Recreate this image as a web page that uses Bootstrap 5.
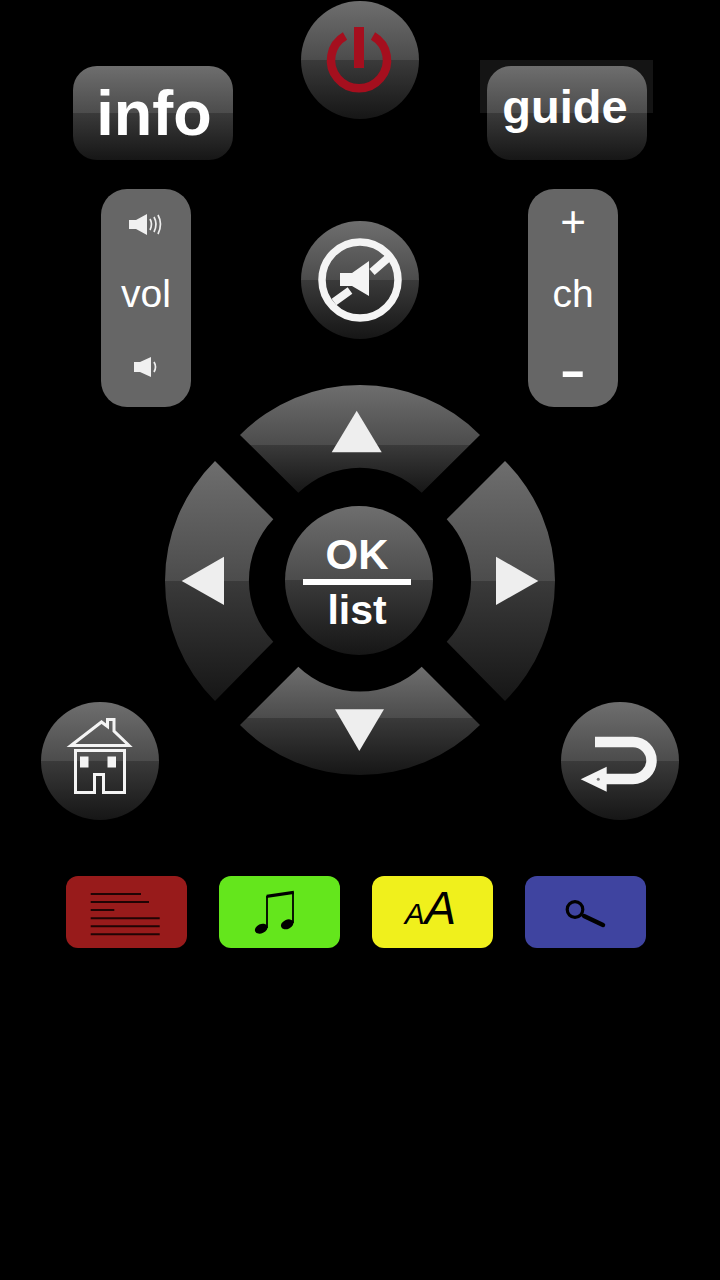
<!DOCTYPE html>
<html lang="en">

<head>
    <meta charset="UTF-8" />
    <meta name="viewport" content="width=device-width, initial-scale=1" />
    <title>Remote</title>
    <link href="https://cdn.jsdelivr.net/npm/bootstrap@5.3.2/dist/css/bootstrap.min.css" rel="stylesheet" />
    <style>
        html,
        body {
            background: #000;
            font-family: "Liberation Sans", Arial, sans-serif;
        }

        .remote {
            width: 720px;
            height: 1280px;
            overflow: hidden;
        }

        .key {
            border: 0;
            padding: 0;
            color: #fff;
            font-family: "Liberation Sans", Arial, sans-serif;
            line-height: 1;
        }

        .gloss {
            background: linear-gradient(#6e6e6e 0, #4c4c4c 50%, #3a3a3a 50%, #161616 100%);
        }

        .round-key {
            width: 118px;
            height: 118px;
            border-radius: 50%;
        }

        .wide-key {
            width: 160px;
            height: 94px;
            border-radius: 24px;
        }

        .top-row {
            padding: 1px 73px 0;
        }

        .info-key {
            margin-top: 65px;
            font-size: 63px;
            font-weight: 700;
            padding-left: 2px;
        }

        .guide-wrap {
            margin-top: 65px;
            width: 160px;
            height: 94px;
        }

        .guide-shade {
            left: -7px;
            top: -6px;
            width: 173px;
            height: 53px;
            background: #141414;
        }

        .guide-key {
            font-size: 47px;
            font-weight: 700;
            padding-bottom: 14px;
            padding-right: 4px;
        }

        .mid-row {
            margin-top: 29px;
            padding: 0 102px 0 101px;
        }

        .rocker {
            width: 90px;
            height: 218px;
            border-radius: 26px;
            background: #666;
            color: #fff;
        }

        .rocker-word {
            font-size: 39px;
            line-height: 1;
        }

        .mute-key {
            margin-top: 32px;
        }

        .vol-up {
            margin-top: 20px;
        }

        .vol-word {
            margin-top: 35px;
        }

        .vol-down {
            margin-top: 41px;
        }

        .ch-plus {
            margin-top: 8px;
            font-size: 44px;
            line-height: 50px;
        }

        .ch-word {
            margin-top: 27px;
        }

        .ch-minus {
            margin-top: 32px;
            font-size: 46px;
            font-weight: 700;
            line-height: 50px;
            transform: scaleX(1.7);
        }

        .pad-row {
            margin-top: -22px;
            padding: 0 41px;
            height: 435px;
        }

        .dpad {
            width: 390px;
            height: 390px;
        }

        .ok-key {
            left: 120px;
            top: 121px;
            width: 148px;
            height: 149px;
            border-radius: 50%;
            font-weight: 700;
            padding: 4px 4px 0 0;
        }

        .ok-word {
            font-size: 42px;
            line-height: 48px;
        }

        .ok-bar {
            width: 108px;
            height: 6px;
            background: #fff;
        }

        .list-word {
            margin-top: 1px;
            font-size: 41px;
            line-height: 48px;
        }

        .color-row {
            margin-top: 56px;
            padding-left: 66px;
            gap: 32px;
        }

        .color-key {
            width: 121px;
            height: 72px;
            border-radius: 12px;
        }

        .key-red {
            background: #981b1b;
        }

        .key-green {
            background: #64e61c;
        }

        .key-yellow {
            background: #f0f01c;
            color: #000;
            font-style: italic;
            padding: 8px 4px 0 0;
        }

        .key-blue {
            background: #3f44a0;
        }

        .aa-small {
            font-size: 30px;
        }

        .aa-big {
            font-size: 47px;
        }
    </style>
</head>

<body>
    <div class="remote">
        <div class="top-row d-flex justify-content-between align-items-start">
            <button type="button" class="btn key gloss wide-key info-key d-flex align-items-center justify-content-center">info</button>
            <button type="button" class="btn key gloss round-key d-flex align-items-center justify-content-center" aria-label="power">
                <svg width="118" height="118" viewBox="0 0 118 118">
                    <path d="M44 35A28 28 0 1 0 72 35" fill="none" stroke="#a50f1e" stroke-width="8.5" />
                    <rect x="53" y="26" width="10" height="41" fill="#a50f1e" />
                </svg>
            </button>
            <div class="guide-wrap position-relative">
                <div class="guide-shade position-absolute"></div>
                <button type="button" class="btn key gloss wide-key guide-key position-relative d-flex align-items-center justify-content-center">guide</button>
            </div>
        </div>

        <div class="mid-row d-flex justify-content-between align-items-start">
            <div class="rocker d-flex flex-column align-items-center">
                <svg class="vol-up" width="36" height="30" viewBox="0 0 36 30">
                    <path d="M1 11H8L19 5V26L8 20H1Z" fill="#f0f0f0" />
                    <path d="M22 10Q25 15 22 21M26 8Q30 15 26 23M30 6Q35 15 30 25" fill="none" stroke="#eee" stroke-width="1.7" />
                </svg>
                <div class="rocker-word vol-word">vol</div>
                <svg class="vol-down" width="30" height="26" viewBox="0 0 30 26">
                    <path d="M3 8H9L20 3V23L9 18H3Z" fill="#f0f0f0" />
                    <path d="M23 8Q26 13 23 18" fill="none" stroke="#eee" stroke-width="1.7" />
                </svg>
            </div>

            <button type="button" class="btn key gloss round-key mute-key d-flex align-items-center justify-content-center" aria-label="mute">
                <svg width="118" height="118" viewBox="0 0 118 118">
                    <circle cx="59" cy="59" r="38" fill="none" stroke="#f4f4f4" stroke-width="7.5" />
                    <path d="M33 81L49 69.5M71 51L87 37" fill="none" stroke="#f4f4f4" stroke-width="8" />
                    <path d="M39 52H51L68 40V75L51 65H39Z" fill="#f4f4f4" />
                </svg>
            </button>

            <div class="rocker d-flex flex-column align-items-center">
                <div class="ch-plus">+</div>
                <div class="rocker-word ch-word">ch</div>
                <div class="ch-minus">-</div>
            </div>
        </div>

        <div class="pad-row d-flex justify-content-between">
            <button type="button" class="btn key gloss round-key align-self-end d-flex align-items-center justify-content-center" aria-label="home">
                <svg width="118" height="118" viewBox="0 0 118 118">
                    <path d="M30 43.5L60.5 20L66.5 24.5V17.5H73V29L88 43.5Z" fill="none" stroke="#f4f4f4" stroke-width="3" />
                    <path d="M34.5 48.5H83.5V90.5H62.5V72.5H53.5V90.5H34.5Z" fill="none" stroke="#f4f4f4" stroke-width="3" />
                    <rect x="39" y="54.5" width="8.5" height="11" fill="#f4f4f4" />
                    <rect x="66.5" y="54.5" width="8.5" height="11" fill="#f4f4f4" />
                </svg>
            </button>

            <div class="dpad position-relative">
                <svg width="390" height="390" viewBox="165 385 390 390">
                    <defs>
                        <linearGradient id="glossTop" x1="0" y1="0" x2="0" y2="1">
                            <stop offset="0" stop-color="#6e6e6e" />
                            <stop offset=".56" stop-color="#4c4c4c" />
                            <stop offset=".56" stop-color="#3a3a3a" />
                            <stop offset="1" stop-color="#161616" />
                        </linearGradient>
                        <linearGradient id="glossBottom" x1="0" y1="0" x2="0" y2="1">
                            <stop offset="0" stop-color="#6e6e6e" />
                            <stop offset=".47" stop-color="#4c4c4c" />
                            <stop offset=".47" stop-color="#3a3a3a" />
                            <stop offset="1" stop-color="#161616" />
                        </linearGradient>
                        <linearGradient id="glossSide" x1="0" y1="0" x2="0" y2="1">
                            <stop offset="0" stop-color="#6e6e6e" />
                            <stop offset=".5" stop-color="#4c4c4c" />
                            <stop offset=".5" stop-color="#3a3a3a" />
                            <stop offset="1" stop-color="#161616" />
                        </linearGradient>
                    </defs>
                    <path d="M240 435A169 169 0 0 1 480 435L421.7 492.7A89 89 0 0 0 298.3 492.7Z" fill="url(#glossTop)" />
                    <path d="M240 725A169 169 0 0 0 480 725L421.7 666.7A89 89 0 0 1 298.3 666.7Z" fill="url(#glossBottom)" />
                    <path d="M215 461A169 169 0 0 0 215 701L273.3 641.7A89 89 0 0 1 273.3 519.3Z" fill="url(#glossSide)" />
                    <path d="M505 461A169 169 0 0 1 505 701L446.7 641.7A89 89 0 0 0 446.7 519.3Z" fill="url(#glossSide)" />
                    <path d="M356.7 410.7L381.7 452.3H331.7Z" fill="#eee" />
                    <path d="M335 709.3H384L359.3 751Z" fill="#eee" />
                    <path d="M181.7 581L224 556.7V605Z" fill="#eee" />
                    <path d="M538.3 581L496 556.7V605Z" fill="#eee" />
                </svg>
                <button type="button" class="btn key gloss ok-key position-absolute d-flex flex-column align-items-center justify-content-center">
                    <span class="ok-word">OK</span>
                    <span class="ok-bar"></span>
                    <span class="list-word">list</span>
                </button>
            </div>

            <button type="button" class="btn key gloss round-key align-self-end d-flex align-items-center justify-content-center" aria-label="back">
                <svg width="118" height="118" viewBox="0 0 118 118">
                    <path d="M34 40H72A18.5 18.5 0 0 1 72 77H45" fill="none" stroke="#f4f4f4" stroke-width="10.5" />
                    <path d="M19.7 77.3L45.7 64.7V89.7Z" fill="#f4f4f4" />
                    <circle cx="37.3" cy="77.3" r="1.5" fill="#777" />
                </svg>
            </button>
        </div>

        <div class="color-row d-flex">
            <button type="button" class="btn key color-key key-red d-flex align-items-center justify-content-center" aria-label="text">
                <svg width="121" height="72" viewBox="0 0 121 72">
                    <path d="M24.7 18H75M24.7 26H83M24.7 34H48.3M24.7 42.3H93.7M24.7 50.3H93.7M24.7 58.3H93.7" fill="none" stroke="#200404" stroke-width="2" />
                </svg>
            </button>
            <button type="button" class="btn key color-key key-green d-flex align-items-center justify-content-center" aria-label="music">
                <svg width="121" height="72" viewBox="0 0 121 72">
                    <path d="M47.5 18.7L74.8 14.7V18L47.5 22Z" fill="#000" />
                    <path d="M48 20V52M74 16V47" fill="none" stroke="#000" stroke-width="1.8" />
                    <ellipse cx="42.2" cy="52.7" rx="6.6" ry="4.6" transform="rotate(-25 42.2 52.7)" fill="#000" />
                    <ellipse cx="68.2" cy="48.3" rx="6.6" ry="4.6" transform="rotate(-25 68.2 48.3)" fill="#000" />
                </svg>
            </button>
            <button type="button" class="btn key color-key key-yellow d-flex align-items-baseline justify-content-center">
                <span class="aa-small">A</span><span class="aa-big">A</span>
            </button>
            <button type="button" class="btn key color-key key-blue d-flex align-items-center justify-content-center" aria-label="search">
                <svg width="121" height="72" viewBox="0 0 121 72">
                    <circle cx="50" cy="33.5" r="7.8" fill="none" stroke="#000" stroke-width="3.2" />
                    <path d="M59 40L78 49" fill="none" stroke="#000" stroke-width="4.5" stroke-linecap="round" />
                </svg>
            </button>
        </div>
    </div>

    <script src="https://cdn.jsdelivr.net/npm/bootstrap@5.3.2/dist/js/bootstrap.bundle.min.js"></script>
</body>

</html>
